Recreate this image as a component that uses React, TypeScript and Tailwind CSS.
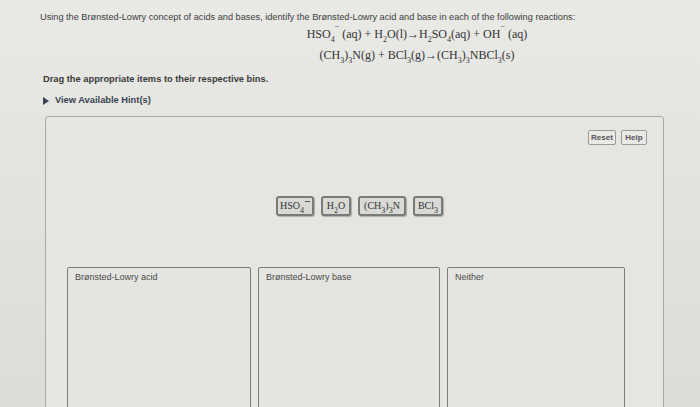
import React from "react";

const Sub = ({ children }: { children: React.ReactNode }) => (
  <sub className="text-[8px] align-[-2px] leading-none">{children}</sub>
);
const Sup = ({ children }: { children: React.ReactNode }) => (
  <sup className="text-[8px] align-[5px] leading-none">{children}</sup>
);

const Chip = ({ w, children }: { w: string; children: React.ReactNode }) => (
  <div
    className={`${w} h-[20px] flex items-center justify-center rounded-[3px] border-2 border-[#7a7a78] bg-[#d9d9d5] text-[10px] text-[#333] shadow-[1px_1px_1px_rgba(0,0,0,0.25)]`}
    style={{ fontFamily: '"Liberation Serif", serif' }}
  >
    <span className="whitespace-nowrap leading-[12px]">{children}</span>
  </div>
);

const Bin = ({ w, label }: { w: string; label: string }) => (
  <div className={`${w} h-[160px] border border-[#7c7c7a] rounded-[2px] bg-[#e4e4e0] px-[7px] pt-[4px]`}>
    <div className="text-[9px] leading-[11px] text-[#4a4a4a]">{label}</div>
  </div>
);

export default function App() {
  return (
    <div
      className="w-[700px] h-[407px] overflow-hidden bg-gradient-to-b from-[#e9e9e6] via-[#e2e2de] to-[#dcdcd8] text-[#3a3a3a] flex flex-col"
      style={{ fontFamily: '"Liberation Sans", Arial, sans-serif' }}
    >
      <div className="pl-[40px] pt-[11px] text-[9.2px] leading-[12px] text-[#3c3c3c]">
        Using the Brønsted-Lowry concept of acids and bases, identify the Brønsted-Lowry acid and base in each of the following reactions:
      </div>
      <div
        className="pl-[134px] flex flex-col items-center text-[12px] text-[#333]"
        style={{ fontFamily: '"Liberation Serif", serif' }}
      >
        <div className="mt-[2px] h-[18px] leading-[18px]">
          HSO<Sub>4</Sub>
          <Sup>−</Sup> (aq) + H<Sub>2</Sub>O(l)→H<Sub>2</Sub>SO<Sub>4</Sub>(aq) + OH<Sup>−</Sup> (aq)
        </div>
        <div className="mt-[3px] h-[18px] leading-[18px]">
          (CH<Sub>3</Sub>)<Sub>3</Sub>N(g) + BCl<Sub>3</Sub>(g)→(CH<Sub>3</Sub>)<Sub>3</Sub>NBCl<Sub>3</Sub>(s)
        </div>
      </div>
      <div className="pl-[43px] mt-[10px] text-[9.3px] leading-[11px] font-bold text-[#3a3a3a]">
        Drag the appropriate items to their respective bins.
      </div>
      <div className="pl-[43px] mt-[10px] flex items-center gap-[6px] text-[9.3px] leading-[11px] font-bold text-[#3a4450]">
        <svg width="6" height="8" viewBox="0 0 6 8">
          <path d="M0 0 L6 4 L0 8 Z" fill="#3a4450" />
        </svg>
        <span>View Available Hint(s)</span>
      </div>
      <div className="ml-[45px] mt-[10px] w-[619px] flex-1 border border-[#a8a8a4] rounded-t-[3px] bg-[#e5e5e1] flex flex-col">
        <div className="flex justify-end gap-[5px] pr-[16px] pt-[13px]">
          <button className="w-[28px] h-[15px] border border-[#9a9a98] rounded-[2px] bg-[#e9e9e6] text-[8px] font-bold text-[#555] leading-none">
            Reset
          </button>
          <button className="w-[26px] h-[15px] border border-[#9a9a98] rounded-[2px] bg-[#e9e9e6] text-[8px] font-bold text-[#555] leading-none">
            Help
          </button>
        </div>
        <div className="flex pl-[230px] gap-[7px] mt-[51px]">
          <Chip w="w-[38px]">
            HSO<Sub>4</Sub>
            <span className="inline-block w-[5px] h-px bg-[#555] align-[7px] ml-[1px]" />
          </Chip>
          <Chip w="w-[30px]">
            H<Sub>2</Sub>O
          </Chip>
          <Chip w="w-[48px]">
            (CH<Sub>3</Sub>)<Sub>3</Sub>N
          </Chip>
          <Chip w="w-[30px]">
            BCl<Sub>3</Sub>
          </Chip>
        </div>
        <div className="flex pl-[21px] gap-[7px] mt-[51px]">
          <Bin w="w-[184px]" label="Brønsted-Lowry acid" />
          <Bin w="w-[182px]" label="Brønsted-Lowry base" />
          <Bin w="w-[178px]" label="Neither" />
        </div>
      </div>
    </div>
  );
}
